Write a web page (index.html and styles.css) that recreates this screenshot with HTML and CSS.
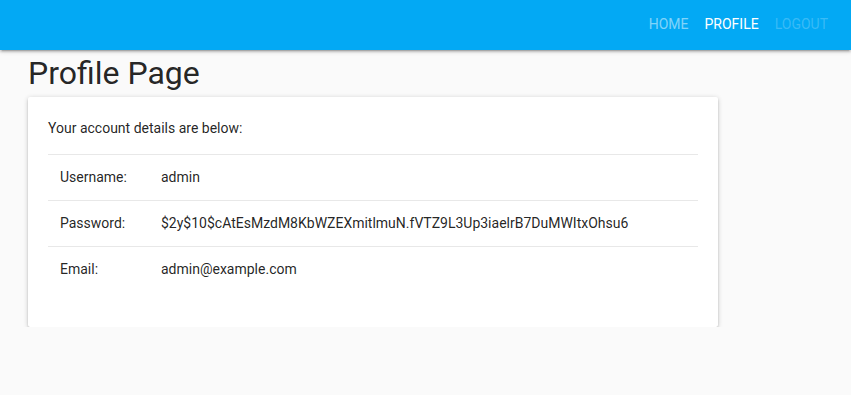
FILE: index.html
```html
<!DOCTYPE html>
<html>
<head>
  <title>Profile</title>
  <meta name="viewport" content="width=device-width, initial-scale=1.0">
  <link rel="stylesheet" href="styles.css">
</head>
<body>
  <nav class="topbar">
    <ul class="nav-links">
      <li><a href="#" class="link-home">Home</a></li>
      <li><a href="#" class="link-active">Profile</a></li>
      <li><a href="#" class="link-faded">Logout</a></li>
    </ul>
  </nav>

  <main class="container">
    <h1 class="page-title">Profile Page</h1>

    <div class="card">
      <p class="intro">Your account details are below:</p>
      <table class="details">
        <tr>
          <td class="label">Username:</td>
          <td>admin</td>
        </tr>
        <tr>
          <td class="label">Password:</td>
          <td>$2y$10$cAtEsMzdM8KbWZEXmitlmuN.fVTZ9L3Up3iaelrB7DuMWItxOhsu6</td>
        </tr>
        <tr>
          <td class="label">Email:</td>
          <td>admin@example.com</td>
        </tr>
      </table>
    </div>
  </main>
</body>
</html>
```

FILE: styles.css
```css
body {
  margin: 0;
  font-family: Roboto, "Liberation Sans", sans-serif;
  background: #fafafa;
  color: rgba(0, 0, 0, 0.87);
}

/* Top bar */
.topbar {
  height: 50px;
  background: #03a9f4;
  box-shadow: 0 2px 2px 0 rgba(0,0,0,0.14), 0 3px 1px -2px rgba(0,0,0,0.12), 0 1px 5px 0 rgba(0,0,0,0.2);
  display: flex;
  justify-content: flex-end;
  align-items: center;
  padding-right: 23px;
}
.nav-links {
  list-style: none;
  margin: 0;
  padding: 0 0 2px;
  display: flex;
  gap: 16px;
}
.nav-links a {
  text-decoration: none;
  text-transform: uppercase;
  font-size: 14px;
  line-height: 20px;
  color: #fff;
}
.nav-links .link-home {
  color: rgba(255, 255, 255, 0.5);
}
.nav-links .link-faded {
  color: rgba(255, 255, 255, 0.22);
}

/* Content */
.container {
  width: 690px;
  margin-left: 28px;
}
.page-title {
  font-size: 32px;
  font-weight: 400;
  line-height: 40px;
  margin: 0;
  padding-top: 3px;
  margin-bottom: 4px;
}

.card {
  background: #fff;
  padding: 20px 20px 35px;
  box-shadow: 0 2px 2px 0 rgba(0,0,0,0.14), 0 3px 1px -2px rgba(0,0,0,0.12), 0 1px 5px 0 rgba(0,0,0,0.2);
  border-radius: 2px;
}
.intro {
  margin: 0 0 15px;
  font-size: 14px;
  line-height: 22px;
}

.details {
  width: 100%;
  border-collapse: collapse;
  font-size: 14px;
}
.details tr {
  border-top: 1px solid #e8e8e8;
}
.details td {
  padding: 12px;
  line-height: 21px;
}
.details .label {
  width: 77px;
}
```
